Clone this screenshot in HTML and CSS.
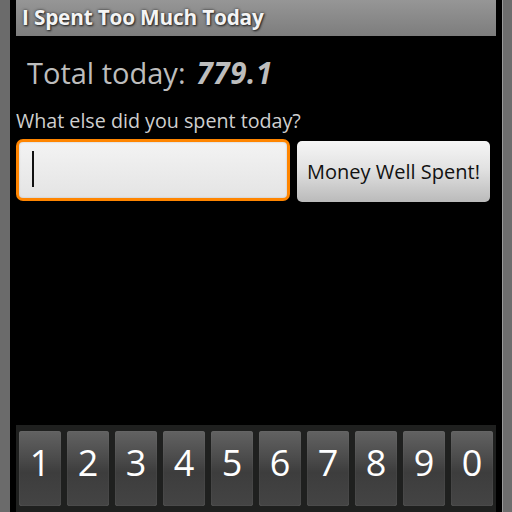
FILE: index.html
```html
<!DOCTYPE html>
<html>
<head>
<meta charset="utf-8">
<link rel="stylesheet" href="styles.css">
</head>
<body>
<div class="frame">
  <div class="side left"></div>
  <div class="screen">
    <div class="titlebar"><span class="title">I Spent Too Much Today</span></div>
    <div class="content">
      <div class="total"><span class="label">Total today:</span><span class="amount">779.1</span></div>
      <div class="question">What else did you spent today?</div>
      <div class="row">
        <div class="input"><span class="cursor"></span></div>
        <div class="button">Money Well Spent!</div>
      </div>
    </div>
    <div class="spacer"></div>
    <div class="keypad">
      <div class="key">1</div><div class="key">2</div><div class="key">3</div><div class="key">4</div><div class="key">5</div><div class="key">6</div><div class="key">7</div><div class="key">8</div><div class="key">9</div><div class="key">0</div>
    </div>
  </div>
  <div class="side right"></div>
</div>
</body>
</html>
```
FILE: styles.css
```css
* { box-sizing: border-box; }
html, body { margin: 0; padding: 0; background: #000; }
.frame { display: flex; width: 512px; height: 512px; overflow: hidden; }
.side { width: 10px; background: #6b6b6b; }
.side.right { border-left: 1px solid #9a9a9a; background: #6e6e6e; }
.screen { flex: 1; display: flex; flex-direction: column; padding: 0 6px; background: #000; }
.titlebar {
  height: 36px;
  background: linear-gradient(#969696, #7d7d7d);
  padding: 3px 0 0 6px;
}
.title {
  font-family: "Open Sans", "DejaVu Sans", sans-serif;
  font-weight: bold;
  font-size: 20.8px;
  color: #f4f4f4;
  text-shadow: 0 0 3px #333, 1px 1px 2px #222;
  letter-spacing: -0.2px;
}
.content { display: flex; flex-direction: column; }
.total {
  margin-top: 16px;
  padding-left: 11px;
  font-family: "Open Sans", "DejaVu Sans", sans-serif;
  font-size: 29px;
  color: #bdbdbd;
  line-height: 42px;
  display: flex;
  gap: 11px;
}
.amount { font-weight: bold; font-style: italic; font-size: 29.5px; letter-spacing: 0.6px; }
.question {
  margin-top: 14px;
  font-family: "Open Sans", "DejaVu Sans", sans-serif;
  font-size: 19.7px;
  color: #cfcfcf;
  line-height: 26px;
}
.row { display: flex; margin-top: 5px; align-items: flex-start; }
.input {
  width: 274px;
  height: 62px;
  border: 3px solid #ff8500;
  border-radius: 7px;
  background: linear-gradient(#f3f3f3, #e4e4e4);
  box-shadow: inset 0 0 2px #bbb;
  padding: 9px 0 0 13px;
}
.cursor { display: block; width: 2px; height: 36px; background: #111; }
.button {
  margin-left: 7px;
  margin-top: 2px;
  width: 193px;
  height: 61px;
  border-radius: 5px;
  background: linear-gradient(#f6f6f6 0%, #e2e2e2 45%, #bababa 100%);
  font-family: "Open Sans", "DejaVu Sans", sans-serif;
  font-size: 20px;
  color: #111;
  display: flex;
  align-items: center;
  justify-content: center;
}
.spacer { flex: 1; }
.keypad {
  height: 87px;
  background: #1f201f;
  display: flex;
  gap: 6px;
  padding: 6px 3px 0 3px;
}
.key {
  width: 42px;
  height: 75px;
  border-radius: 3px;
  background: linear-gradient(#626262 0%, #4c4c4c 35%, #3d3d3d 55%, #444 100%);
  box-shadow: inset 0 0 1px #888;
  font-family: "Open Sans", "DejaVu Sans", sans-serif;
  font-size: 36px;
  color: #fff;
  display: flex;
  align-items: center;
  justify-content: center;
  padding-bottom: 12px;
}
```
